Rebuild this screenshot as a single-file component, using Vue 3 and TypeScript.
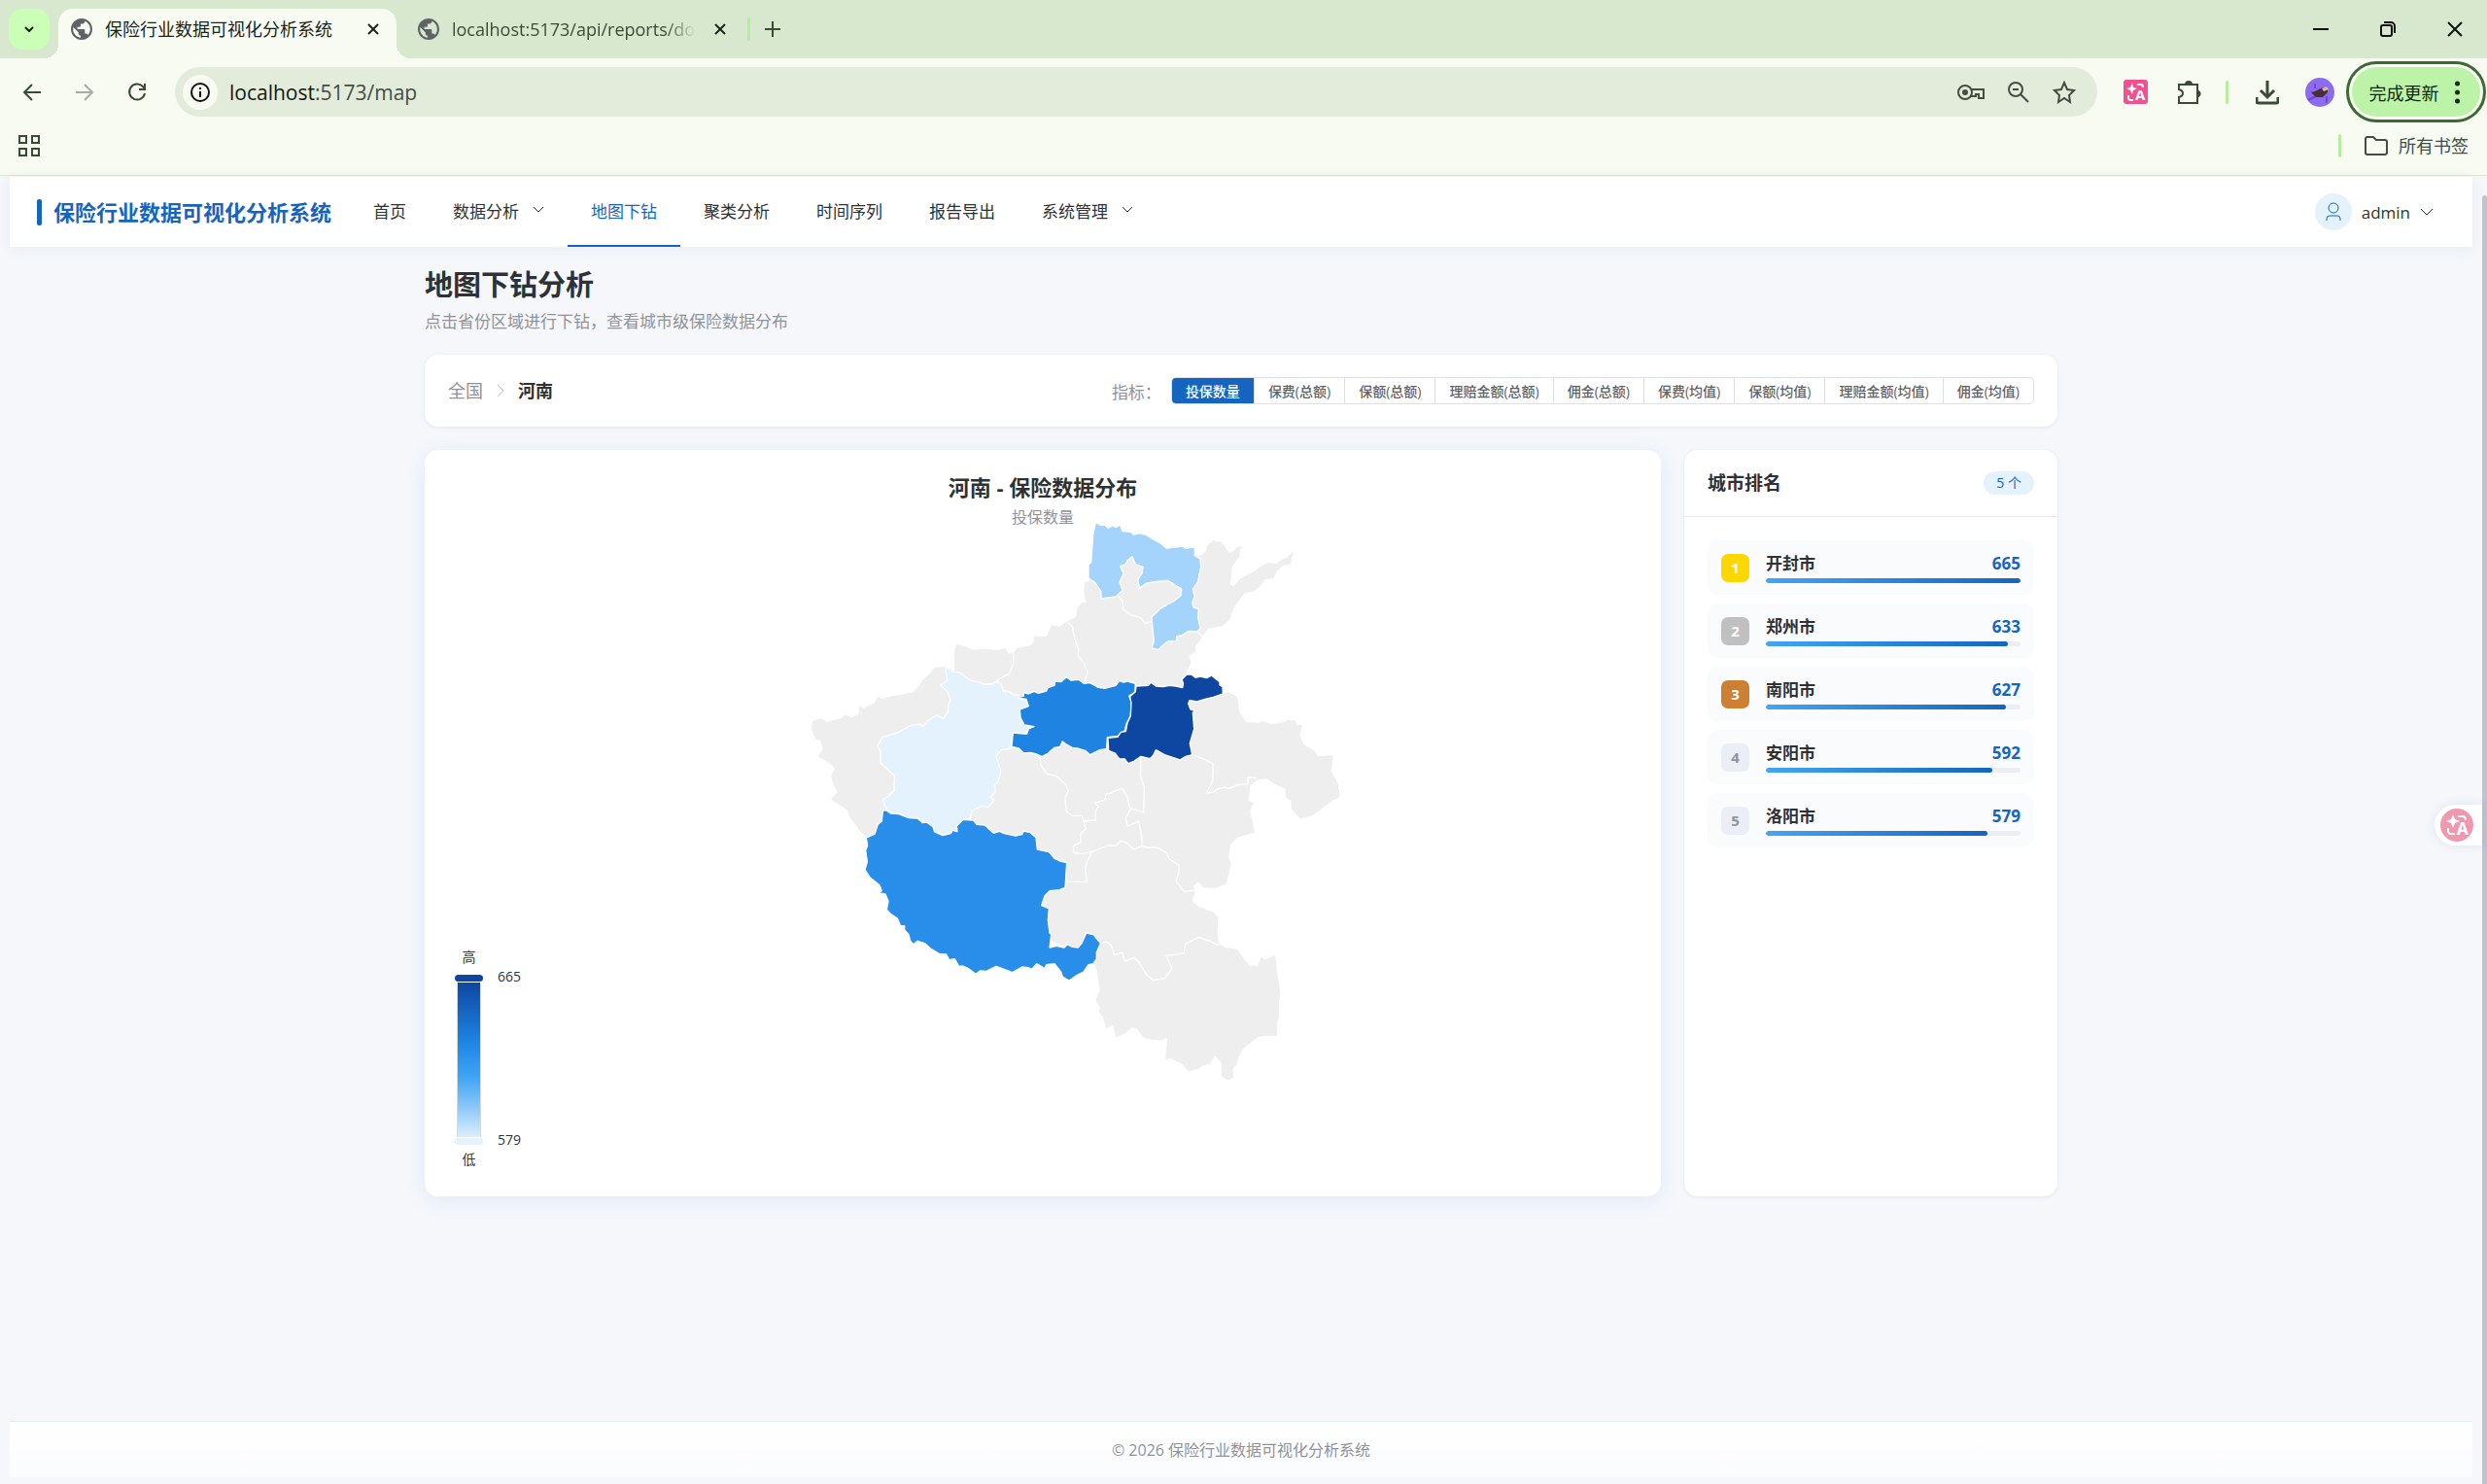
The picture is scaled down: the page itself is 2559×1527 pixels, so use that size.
<script setup lang="ts">
import { ref } from 'vue'

interface NavItem { label: string; menu?: boolean; active?: boolean }
interface City { name: string; value: number }
interface Region { name: string; color: string; points: string }

const navItems: NavItem[] = [
  { label: '首页' },
  { label: '数据分析', menu: true },
  { label: '地图下钻', active: true },
  { label: '聚类分析' },
  { label: '时间序列' },
  { label: '报告导出' },
  { label: '系统管理', menu: true },
]

const metrics = [
  '投保数量', '保费(总额)', '保额(总额)', '理赔金额(总额)', '佣金(总额)',
  '保费(均值)', '保额(均值)', '理赔金额(均值)', '佣金(均值)',
]
const metric = ref(metrics[0])

const cities: City[] = [
  { name: '开封市', value: 665 },
  { name: '郑州市', value: 633 },
  { name: '南阳市', value: 627 },
  { name: '安阳市', value: 592 },
  { name: '洛阳市', value: 579 },
]
const top = cities[0].value

const globe = 'M12 2C6.48 2 2 6.48 2 12s4.48 10 10 10 10-4.48 10-10S17.52 2 12 2zm-1 17.93c-3.95-.49-7-3.85-7-7.93 0-.62.08-1.21.21-1.79L9 15v1c0 1.1.9 2 2 2v1.93zm6.900-2.540c-.26-.81-1-1.390-1.900-1.390h-1v-3c0-.55-.45-1-1-1H8v-2h2c.55 0 1-.45 1-1V7h2c1.100 0 2-.9 2-2v-.41c2.930 1.190 5 4.060 5 7.410 0 2.080-.8 3.970-2.100 5.390z'

// Province silhouette, then the borders between cities without data
const province =
  '45,690 48,665 75,658 92,668 135,658 150,645 168,656 190,645 193,619 205,626 240,608 250,592 265,598 285,590 330,583 360,576 375,560 388,540 410,520 425,500 455,498 465,500 480,512 487,510 485,452 492,430 520,434 545,446 575,443 620,447 642,440 655,458 668,455 680,440 715,434 730,425 732,403 770,406 785,370 812,374 832,358 862,344 866,315 880,300 892,300 886,262 888,238 907,232 920,238 940,200 1000,140 1100,130 1228,158 1245,155 1265,140 1265,125 1285,107 1295,112 1305,110 1320,125 1335,147 1350,140 1358,130 1372,125 1365,160 1343,190 1338,245 1348,250 1370,225 1410,205 1430,190 1455,177 1480,180 1495,168 1515,160 1533,140 1523,182 1500,185 1480,205 1472,225 1445,228 1430,250 1410,265 1380,272 1360,300 1340,335 1340,348 1315,372 1270,380 1252,405 1230,435 1230,452 1210,465 1218,487 1202,510 1210,560 1300,585 1315,585 1330,575 1360,592 1365,635 1385,668 1425,672 1437,665 1465,675 1505,670 1515,660 1525,665 1535,662 1545,678 1560,678 1552,710 1565,738 1600,760 1608,775 1655,772 1650,820 1670,860 1676,895 1673,903 1655,910 1620,937 1590,958 1553,968 1528,938 1525,912 1508,900 1508,875 1475,860 1450,843 1420,848 1400,865 1393,912 1410,918 1398,945 1405,970 1412,1010 1360,1025 1340,1045 1332,1085 1340,1105 1333,1140 1325,1168 1290,1183 1255,1180 1238,1162 1225,1175 1228,1200 1220,1220 1240,1240 1255,1243 1265,1250 1285,1255 1300,1272 1298,1320 1302,1355 1325,1365 1360,1370 1380,1400 1398,1423 1412,1420 1422,1424 1432,1395 1445,1402 1477,1388 1482,1440 1492,1505 1488,1540 1488,1575 1482,1600 1482,1638 1450,1637 1425,1640 1380,1675 1362,1705 1358,1725 1345,1740 1348,1765 1330,1775 1310,1760 1310,1720 1290,1698 1275,1725 1255,1728 1240,1740 1208,1747 1190,1725 1155,1708 1138,1712 1143,1645 1120,1652 1070,1645 1052,1618 1035,1612 1010,1632 985,1642 975,1605 955,1615 945,1580 932,1565 935,1550 922,1528 935,1495 927,1440 915,1412 880,1390 700,1300 300,1060 214,1026 190,1000 165,965 155,940 125,920 105,908 125,885 112,860 105,835 118,812 100,796 65,775 80,752 72,725 58,722'

const borders: string[] = [
  '992,280 1005,295 1008,322 1030,338 1062,348 1075,365 1097,358',
  '832,358 850,375 857,410 868,440 868,465 885,485 897,515 888,545',
  '668,455 668,490 655,520 625,535 615,545',
  '1235,390 1245,398 1252,405',
  '750,776 752,800 772,830 800,835 825,858 838,880 828,905 832,945 850,958 880,958 885,975 922,972 922,945 930,930 920,918 950,910 955,890 965,890 990,878 1005,875 1020,900 1028,935 1070,948 1072,870 1060,835 1062,782',
  '885,975 892,998 875,1015 875,1040 855,1050 853,1072 880,1076 915,1068 960,1050 985,1050 1000,1035 1020,1043 1040,1062 1065,1052 1065,1025 1055,975 1020,990 1015,965 1030,938',
  '910,1072 900,1090 890,1120 895,1162 870,1162 833,1162',
  '1065,1052 1080,1056 1110,1055 1140,1072 1150,1092 1180,1112 1177,1140 1170,1160 1195,1192 1225,1188',
  '1222,770 1260,785 1285,798 1283,850 1265,888 1285,885 1300,875 1320,870 1335,874 1360,862 1392,860 1393,840 1420,842',
  '937,1352 955,1347 970,1357 980,1388 1005,1380 1012,1408 1040,1396 1055,1410 1080,1450 1100,1466 1135,1460 1158,1430 1140,1390 1195,1383 1198,1355 1240,1333 1275,1345 1302,1358',
]

const regions: Region[] = [
  {
    name: '洛阳市',
    color: '#e3f2fd',
    points: '460,502 475,503 480,515 500,515 515,525 535,540 560,545 580,552 600,552 615,545 632,552 635,572 655,575 670,585 685,585 690,598 708,600 714,620 690,630 688,655 702,678 730,683 713,690 708,705 667,702 660,750 630,755 615,775 630,820 622,850 610,865 612,885 598,900 608,910 590,932 572,928 540,942 535,968 513,970 495,990 495,1005 478,1005 475,1012 450,1018 425,1008 422,992 385,978 375,965 345,965 315,952 290,950 280,942 270,925 265,910 285,895 300,880 302,835 285,820 258,795 258,760 248,742 265,715 310,702 350,680 380,675 388,683 400,668 430,648 452,658 465,640 468,615 475,600 465,575 443,555 465,540 458,510',
  },
  {
    name: '郑州市',
    color: '#1e83e1',
    points: '685,592 700,588 700,578 715,582 732,574 745,580 770,573 775,563 795,556 797,543 815,545 832,530 845,540 870,538 885,550 905,548 930,562 950,565 970,560 985,556 995,542 1008,546 1020,543 1045,550 1043,578 1025,588 1032,605 1030,650 1018,672 1012,695 990,712 958,716 956,752 935,755 920,762 905,770 890,757 865,750 850,748 830,737 820,728 812,745 795,748 775,765 757,776 740,768 720,763 700,765 685,750 663,745 667,702 710,706 715,690 732,683 702,678 690,655 688,630 715,620 708,598 685,595',
  },
  {
    name: '安阳市',
    color: '#a4d4fb',
    points: '922,52 940,62 952,60 960,70 975,62 985,68 998,60 1005,80 1030,82 1040,90 1060,86 1080,92 1095,102 1120,115 1140,132 1180,128 1190,126 1200,133 1215,130 1228,130 1228,155 1245,165 1247,190 1242,215 1238,235 1222,260 1228,280 1220,300 1225,315 1240,320 1238,345 1245,380 1235,390 1210,388 1190,400 1172,405 1172,418 1145,420 1130,432 1115,446 1095,440 1102,420 1098,380 1095,345 1120,320 1145,305 1165,295 1185,278 1187,258 1165,245 1145,232 1110,235 1080,240 1058,255 1052,230 1065,210 1068,190 1045,182 1035,158 1020,170 1015,182 998,188 1008,210 996,238 1005,262 985,282 940,288 938,265 920,238 900,225 900,182 908,176 912,120 914,90',
  },
  {
    name: '南阳市',
    color: '#288ee9',
    points: '265,943 275,941 290,951 315,953 345,965 372,966 388,980 400,978 420,992 425,1008 450,1019 475,1013 480,1003 495,1007 493,990 513,970 545,972 555,985 580,987 607,1012 625,1006 640,1013 675,1020 695,1016 700,1005 720,1010 738,1025 742,1062 778,1070 795,1090 812,1098 833,1103 830,1150 828,1180 810,1187 780,1190 765,1205 755,1235 778,1245 775,1280 780,1320 785,1325 780,1365 800,1360 825,1365 835,1355 850,1363 868,1365 880,1350 893,1320 915,1325 937,1352 925,1380 925,1400 915,1415 900,1418 885,1440 865,1450 840,1467 820,1455 815,1440 795,1415 770,1418 765,1430 740,1415 725,1432 715,1427 695,1425 665,1442 640,1432 615,1423 585,1438 565,1437 552,1447 530,1430 512,1422 500,1423 487,1400 470,1403 460,1385 440,1385 415,1370 395,1352 372,1345 360,1355 350,1345 345,1325 332,1310 332,1298 320,1298 310,1275 290,1262 277,1248 282,1222 273,1200 252,1197 262,1190 255,1172 225,1148 210,1125 217,1100 212,1065 218,1050 214,1026 240,1015 250,985 262,975',
  },
  {
    name: '开封市',
    color: '#0d47a1',
    points: '1047,558 1085,556 1093,547 1108,558 1130,560 1150,556 1170,558 1190,563 1193,550 1188,538 1203,522 1218,522 1230,532 1245,528 1265,533 1280,525 1290,533 1305,545 1305,555 1314,560 1315,582 1285,592 1260,598 1235,606 1212,602 1208,612 1215,630 1230,634 1222,640 1226,690 1220,710 1213,735 1220,770 1200,775 1182,786 1160,778 1135,770 1108,755 1100,772 1090,782 1062,775 1040,790 1022,797 1012,783 995,782 982,765 962,757 960,718 990,715 1000,700 1015,698 1020,672 1030,650 1032,610 1028,590 1045,575',
  },
]
</script>

<template>
  <div class="screen">
    <header class="browser">
      <div class="tabstrip">
        <button class="tab-search" aria-label="搜索标签页">
          <svg width="14" height="14" viewBox="0 0 14 14"><path d="M3 5l4 4 4-4" class="ln" /></svg>
        </button>
        <div class="tab tab-active">
          <svg class="globe" viewBox="2 2 20 20"><path :d="globe" /></svg>
          <span class="tab-title">保险行业数据可视化分析系统</span>
          <button class="close" aria-label="关闭"><svg width="14" height="14" viewBox="0 0 14 14"><path d="M2 2l10 10M12 2L2 12" class="ln" /></svg></button>
        </div>
        <div class="tab">
          <svg class="globe" viewBox="2 2 20 20"><path :d="globe" /></svg>
          <span class="tab-title faded">localhost:5173/api/reports/do</span>
          <button class="close" aria-label="关闭"><svg width="14" height="14" viewBox="0 0 14 14"><path d="M2 2l10 10M12 2L2 12" class="ln" /></svg></button>
        </div>
        <i class="sep"></i>
        <button class="new-tab" aria-label="新标签页"><svg width="16" height="16" viewBox="0 0 16 16"><path d="M8 0v16M0 8h16" class="ln" /></svg></button>
        <div class="win">
          <button aria-label="最小化"><svg width="16" height="16" viewBox="0 0 16 16"><path d="M0 8h16" class="ln blk" /></svg></button>
          <button aria-label="还原"><svg width="16" height="16" viewBox="0 0 16 16"><rect x="1" y="4" width="11" height="11" rx="2" class="ln blk" /><path d="M4 1h7a4 4 0 014 4v7" class="ln blk" /></svg></button>
          <button aria-label="关闭窗口"><svg width="16" height="16" viewBox="0 0 16 16"><path d="M1 1l14 14M15 1L1 15" class="ln blk" /></svg></button>
        </div>
      </div>

      <div class="toolbar">
        <div class="nav-btns">
          <button aria-label="后退"><svg width="20" height="20" viewBox="0 0 20 20"><path d="M19 10H2M10 2l-8 8 8 8" class="ln" /></svg></button>
          <button aria-label="前进" class="off"><svg width="20" height="20" viewBox="0 0 20 20"><path d="M1 10h17M10 2l8 8-8 8" class="ln" /></svg></button>
          <button aria-label="刷新"><svg width="20" height="20" viewBox="0 0 20 20"><path d="M18 11a8 8 0 11-2-7l2 2M18 1v6h-6" class="ln" /></svg></button>
        </div>
        <div class="omnibox">
          <button class="info" aria-label="网站信息"><svg width="22" height="22" viewBox="0 0 22 22"><circle cx="11" cy="11" r="9" class="ln blk" /><path d="M11 10v6M11 6v2" class="ln blk" /></svg></button>
          <div class="url"><b>localhost</b>:5173/map</div>
          <div class="omni-icons">
            <svg width="28" height="22" viewBox="0 0 28 22"><path d="M14 8h13v9h-5v-4h-3v2h-5" class="ln" /><circle cx="8" cy="11" r="7" class="ln" /><circle cx="8" cy="11" r="3" class="dot" /></svg>
            <svg width="22" height="22" viewBox="0 0 22 22"><circle cx="8" cy="8" r="7" class="ln" /><path d="M5 8h6M13 13l8 8" class="ln" /></svg>
            <svg width="24" height="24" viewBox="0 0 24 24"><path d="M12 2l3 7 7 1-5 5 1 7-6-4-6 4 1-7-5-5 7-1z" class="ln" /></svg>
          </div>
        </div>
        <div class="actions">
          <svg width="25" height="25" viewBox="0 0 25 25"><rect width="25" height="25" rx="3" fill="#f2508f" /><path d="M9 3l1 5 4 1-4 2-1 4-2-4-4-2 4-1z" fill="#fff" /><path d="M14 5h4q2 0 2 3M5 16v3q0 2 3 2h2" class="wl" /><text x="12" y="21" class="glyph">A</text></svg>
          <svg width="26" height="26" viewBox="0 0 26 26"><path d="M2 5h19v19H2v-6q4-1 4-4t-4-4z" class="ln" /><path d="M8 5a4 4 0 018 0zM21 11a3 3 0 010 7z" class="dot" /></svg>
          <i class="sep"></i>
          <svg width="24" height="26" viewBox="0 0 24 26"><path d="M12 1v16M5 11l7 7 7-7M1 18v4q0 2 2 2h18q2 0 2-2v-4" class="ln thick" /></svg>
          <svg width="30" height="30" viewBox="0 0 30 30"><circle cx="15" cy="15" r="15" fill="#8b6cf0" /><path d="M3 23l8-4M10 6v5M22 19v7" stroke="#7446c8" stroke-width="2" /><path d="M6 15l4-1 8-4 5 1v4l-5 5h-7z" fill="#4a2d35" /><path d="M17 11l5-2 2 3-5 2z" fill="#d9b9a0" /></svg>
          <button class="update">完成更新<svg width="5" height="24" viewBox="0 0 10 48"><circle cx="5" cy="6" r="5" /><circle cx="5" cy="24" r="5" /><circle cx="5" cy="42" r="5" /></svg></button>
        </div>
      </div>

      <div class="bookmarks">
        <button aria-label="应用"><svg width="22" height="22" viewBox="0 0 22 22"><path d="M1 1h7v7H1zM14 1h7v7h-7zM1 14h7v7H1zM14 14h7v7h-7z" class="ln" /></svg></button>
        <div class="all-marks">
          <i class="sep"></i>
          <button><svg width="24" height="20" viewBox="0 0 24 20"><path d="M3 1h6l3 3h9q2 0 2 2v11q0 2-2 2H3q-2 0-2-2V3q0-2 2-2z" class="ln" /></svg>所有书签</button>
        </div>
      </div>
    </header>

    <div class="viewport">
      <div class="app">
        <header class="app-head">
          <div class="brand">保险行业数据可视化分析系统</div>
          <nav>
            <a v-for="n in navItems" :key="n.label" href="#" :class="{ on: n.active }">{{ n.label }}<svg v-if="n.menu" width="12" height="8" viewBox="0 0 12 8"><path d="M1 1l5 5 5-5" /></svg></a>
          </nav>
          <button class="user">
            <span class="face"><svg width="18" height="20" viewBox="0 0 18 20"><circle cx="9" cy="6" r="5" /><path d="M2 19v-2q0-3 3-3h8q3 0 3 3v2" /></svg></span>
            admin
            <svg width="14" height="8" viewBox="0 0 14 8"><path d="M1 1l6 6 6-6" /></svg>
          </button>
        </header>

        <main>
          <h1>地图下钻分析</h1>
          <p class="sub">点击省份区域进行下钻，查看城市级保险数据分布</p>

          <section class="card filter">
            <div class="crumbs">
              <a href="#">全国</a>
              <svg width="8" height="14" viewBox="0 0 8 14"><path d="M1 1l6 6-6 6" /></svg>
              <b>河南</b>
            </div>
            <div class="metric">
              <span>指标：</span>
              <div class="group">
                <button v-for="m in metrics" :key="m" :class="{ on: m === metric }" @click="metric = m">{{ m }}</button>
              </div>
            </div>
          </section>

          <div class="cols">
            <section class="card chart">
              <svg class="map" viewBox="-1149 -171 3816 2304">
                <polygon :points="province" fill="#eeeeee" />
                <polyline v-for="b in borders" :key="b" :points="b" class="edge" />
                <polygon v-for="r in regions" :key="r.name" :points="r.points" :fill="r.color" class="edge" />
              </svg>
              <div class="chart-head">
                <h2>河南 - 保险数据分布</h2>
                <p>{{ metric }}</p>
              </div>
              <div class="legend">
                <div class="scale">
                  <span>高</span>
                  <i class="cap hi"></i>
                  <i class="ramp"></i>
                  <i class="cap lo"></i>
                  <span>低</span>
                </div>
                <div class="marks"><span>665</span><span>579</span></div>
              </div>
            </section>

            <aside class="card rank">
              <div class="rank-head"><h3>城市排名</h3><span>5 个</span></div>
              <ol>
                <li v-for="(c, i) in cities" :key="c.name">
                  <span class="no" :class="'n' + (i + 1)">{{ i + 1 }}</span>
                  <div class="info-col">
                    <div class="line"><b>{{ c.name }}</b><em>{{ c.value }}</em></div>
                    <div class="track"><div :style="{ width: (c.value / top) * 100 + '%' }"></div></div>
                  </div>
                </li>
              </ol>
            </aside>
          </div>
        </main>

        <footer>© 2026 保险行业数据可视化分析系统</footer>
      </div>
      <div class="scrollbar"></div>
      <button class="float" aria-label="翻译">
        <svg width="34" height="34" viewBox="0 0 34 34"><circle cx="17" cy="17" r="17" fill="#f098b0" /><path d="M13 6l2 5 5 2-5 2-2 5-2-5-5-2 5-2z" fill="#fff" /><path d="M18 8h5q3 0 3 4M8 20v3q0 3 4 3h3" class="wl" /><text x="17" y="27" class="glyph big">A</text></svg>
      </button>
    </div>
  </div>
</template>

<style>
body { margin: 0; background: #f5f7fb; }
</style>

<style scoped>
* { box-sizing: border-box; }
.screen {
  min-height: 100vh;
  display: flex;
  flex-direction: column;
  font-family: "Open Sans", "Noto Sans CJK SC", sans-serif;
  font-size: 17px;
  color: #303133;
}
button { border: 0; background: none; padding: 0; font: inherit; color: inherit; display: flex; align-items: center; justify-content: center; cursor: pointer; }
a { color: inherit; text-decoration: none; }
h1, h2, h3, p, ol { margin: 0; padding: 0; }
svg { flex: none; display: block; }
.ln { fill: none; stroke: currentColor; stroke-width: 2; }
.thick { stroke-width: 3; }
.blk { stroke: #111; }
.dot { fill: currentColor; }
.wl { fill: none; stroke: #fff; stroke-width: 2; }
.glyph { fill: #fff; font-size: 15px; font-weight: 700; }
.glyph.big { font-size: 17px; }

.browser { background: #f8fbf2; border-bottom: 1px solid #dbe5d0; color: #3a4a35; }
.tabstrip { display: flex; align-items: center; height: 60px; background: #d8e8cf; padding-left: 9px; }
.tab-search { width: 42px; height: 42px; border-radius: 14px; background: #cbffb8; color: #17220f; margin-right: 9px; }
.tab { position: relative; display: flex; align-items: center; width: 348px; height: 51px; align-self: flex-end; padding: 0 17px 9px 13px; gap: 13px; }
.tab + .tab { padding-left: 22px; width: 361px; padding-right: 21px; }
.tab-active { background: #f8fbf2; border-radius: 15px 15px 0 0; color: #1c241a; }
.tab-active::before, .tab-active::after { content: ""; position: absolute; bottom: 0; width: 15px; height: 15px; }
.tab-active::before { left: -15px; background: radial-gradient(circle at 0 0, transparent 15px, #f8fbf2 15px); }
.tab-active::after { right: -15px; background: radial-gradient(circle at 100% 0, transparent 15px, #f8fbf2 15px); }
.globe { width: 22px; height: 22px; fill: #5f6368; }
.tab-title { flex: 1; font-size: 18px; line-height: 26px; white-space: nowrap; }
.faded { mask-image: linear-gradient(90deg, #000 86%, transparent 98%); }
.close { width: 14px; height: 24px; color: #1c241a; }
.sep { width: 3px; height: 24px; border-radius: 2px; background: #b6eca0; }
.new-tab { margin-left: 15px; }
.win { margin-left: auto; display: flex; gap: 53px; padding-right: 25px; }

.toolbar { display: flex; align-items: center; height: 69px; padding-right: 7px; }
.nav-btns { display: flex; gap: 34px; padding-left: 23px; width: 180px; }
.off { color: #a5aca0; }
.omnibox { flex: 1; display: flex; align-items: center; height: 51px; border-radius: 26px; background: #e3ecdb; padding: 0 22px 0 8px; }
.info { width: 36px; height: 36px; border-radius: 50%; background: #f8fbf2; }
.url { margin-left: 12px; flex: 1; font-size: 21px; line-height: 30px; color: #454d42; }
.url b { font-weight: 400; color: #14180f; }
.omni-icons { display: flex; align-items: center; gap: 24px; color: #454d42; }
.actions { display: flex; align-items: center; margin-left: 27px; }
.actions > svg + svg { margin-left: 30px; }
.actions .sep { margin: 0 28px 0 24px; }
.actions > svg + svg:nth-of-type(4) { margin-left: 27px; }
.update { height: 51px; width: 132px; margin-left: 18px; padding-right: 4px; gap: 16px; border-radius: 26px; background: #bdf2a9; color: #0f2a08; font-size: 18px; outline: 3px solid #3c6b32; outline-offset: 3px; }
.update svg { fill: #0f2a08; }
.bookmarks { display: flex; align-items: center; justify-content: space-between; height: 51px; padding: 0 19px 10px; }
.all-marks { display: flex; align-items: center; gap: 24px; color: #454d42; }
.all-marks button { font-size: 18px; line-height: 26px; gap: 11px; }

.viewport { position: relative; flex: 1; display: flex; background: #f5f7fb; padding-top: 1px; }
.app { flex: 1; display: flex; flex-direction: column; margin: 0 10px 7px; }
.scrollbar { width: 5px; margin-top: 19px; border-radius: 3px 3px 0 0; background: #bdc4d0; }
.app-head { display: flex; align-items: center; height: 72px; background: #fff; padding: 0 40px 0 28px; box-shadow: 0 2px 14px rgba(30, 50, 90, 0.07); }
.brand { display: flex; align-items: center; gap: 12px; width: 322px; font-size: 22px; font-weight: 700; line-height: 32px; color: #1565c0; white-space: nowrap; }
.brand::before { content: ""; width: 5px; height: 27px; border-radius: 2px; background: #1565c0; }
nav { display: flex; height: 72px; }
nav a { display: flex; align-items: center; gap: 14px; padding: 0 24px 2px; border-bottom: 2px solid transparent; white-space: nowrap; }
nav a.on { color: #1565c0; border-color: #1565c0; }
nav svg, .user > svg, .face svg, .crumbs svg { fill: none; stroke: currentColor; stroke-width: 1; }
.user { margin-left: auto; gap: 10px; }
.face { width: 38px; height: 38px; border-radius: 50%; background: #e3f2fd; color: #1565c0; display: flex; align-items: center; justify-content: center; }

main { flex: 1; width: 100%; max-width: 1680px; margin: 0 auto; }
h1 { font-size: 29px; line-height: 40px; margin-top: 19px; }
.sub { color: #909399; line-height: 24px; margin-top: 6px; }
.card { background: #fff; border-radius: 14px; box-shadow: 0 1px 4px rgba(30, 50, 90, 0.09); }
.filter { display: flex; align-items: center; justify-content: space-between; height: 74px; padding: 0 24px; margin: 22px 0 24px; }
.crumbs { display: flex; align-items: center; font-size: 18px; line-height: 26px; color: #909399; gap: 14px; }
.crumbs svg { color: #c0c4cc; }
.crumbs b { color: #303133; }
.metric { display: flex; align-items: center; gap: 10px; color: #909399; }
.group { display: flex; border: 1px solid #dcdfe6; border-radius: 5px; overflow: hidden; }
.group button { height: 26px; padding: 0 14px 1px; font-size: 14px; color: #606266; border-right: 1px solid #dcdfe6; font-weight: 500; }
.group button:last-child { border-right: 0; }
.group .on { background: #1565c0; color: #fff; }

.cols { display: grid; grid-template-columns: minmax(0, 1fr) 384px; gap: 24px; }
.chart { display: grid; box-shadow: 0 4px 24px rgba(21, 101, 192, 0.09); }
.chart > * { grid-area: 1 / 1; }
.map { width: 100%; height: auto; }
.edge { stroke: #fff; stroke-width: 4; stroke-linejoin: round; }
polyline.edge { fill: none; }
.chart-head { padding-top: 22px; text-align: center; align-self: start; }
h2 { font-size: 22px; line-height: 32px; }
.chart-head p { font-size: 16px; line-height: 24px; color: #909399; margin-top: 3px; }
.legend { align-self: end; justify-self: start; display: flex; gap: 15px; padding: 0 0 28px 31px; font-size: 14px; line-height: 20px; color: #333; }
.scale { display: flex; flex-direction: column; align-items: center; width: 29px; }
.cap { width: 29px; height: 7px; border-radius: 4px; }
.hi { background: #0d47a1; margin: 8px 0 1px; }
.lo { background: #e3f2fd; margin: 1px 0 5px; }
.ramp { width: 25px; height: 159px; border: 1px solid #d5dbe3; border-width: 0 1px; background: linear-gradient(#0d47a1, #1e88e5 40%, #42a5f5 62%, #90caf9 82%, #dceefd); }
.marks { display: flex; flex-direction: column; justify-content: space-between; padding: 20px 0; }

.rank-head { display: flex; align-items: center; justify-content: space-between; height: 69px; padding: 0 24px; border-bottom: 1px solid #e4e7ed; }
h3 { font-size: 19px; line-height: 28px; }
.rank-head span { padding: 0 13px; border-radius: 12px; font-size: 14px; line-height: 24px; background: #e3f2fd; color: #1565c0; }
ol { list-style: none; display: flex; flex-direction: column; gap: 9px; padding: 24px; }
li { display: flex; align-items: center; gap: 17px; height: 56px; padding: 0 14px; border-radius: 10px; background: #fafbfd; }
.no { width: 29px; height: 29px; border-radius: 7px; font-size: 15px; line-height: 29px; font-weight: 700; text-align: center; background: #ebeef5; color: #909399; }
.n1 { background: #ffd700; color: #fff; }
.n2 { background: #c0c0c0; color: #fff; }
.n3 { background: #cd7f32; color: #fff; }
.info-col { flex: 1; }
.line { display: flex; justify-content: space-between; line-height: 24px; }
.line em { font-style: normal; font-weight: 700; color: #1565c0; }
.track { height: 5px; margin-top: 3px; border-radius: 3px; background: #ebeef5; overflow: hidden; }
.track div { height: 5px; border-radius: 3px; background: linear-gradient(90deg, #42a5f5, #1565c0); }

footer { height: 58px; border-top: 1px solid #e6ebf2; background: linear-gradient(#fff, #fafbfd); text-align: center; font-size: 16px; line-height: 58px; color: #909399; }
.float { position: absolute; right: 5px; top: 647px; width: 49px; height: 42px; padding: 0 9px 0 6px; border-radius: 21px 0 0 21px; background: #fff; box-shadow: 0 0 12px rgba(30, 50, 90, 0.1); }
</style>
